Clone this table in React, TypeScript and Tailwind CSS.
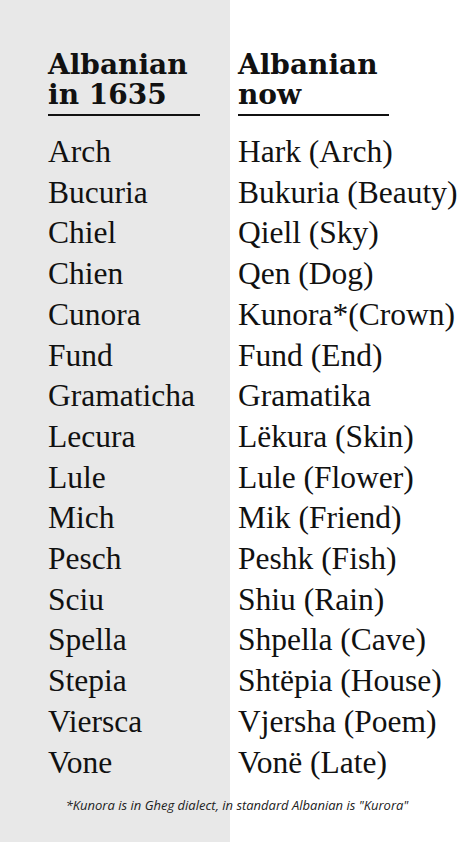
const rows: [string, string][] = [
  ['Arch', 'Hark (Arch)'],
  ['Bucuria', 'Bukuria (Beauty)'],
  ['Chiel', 'Qiell (Sky)'],
  ['Chien', 'Qen (Dog)'],
  ['Cunora', 'Kunora*(Crown)'],
  ['Fund', 'Fund (End)'],
  ['Gramaticha', 'Gramatika'],
  ['Lecura', 'Lëkura (Skin)'],
  ['Lule', 'Lule (Flower)'],
  ['Mich', 'Mik (Friend)'],
  ['Pesch', 'Peshk (Fish)'],
  ['Sciu', 'Shiu (Rain)'],
  ['Spella', 'Shpella (Cave)'],
  ['Stepia', 'Shtëpia (House)'],
  ['Viersca', 'Vjersha (Poem)'],
  ['Vone', 'Vonë (Late)'],
]

export default function App() {
  return (
    <div className="w-[474px] h-[842px] bg-[linear-gradient(to_right,#e8e8e8_230px,#ffffff_230px)] text-[#111] overflow-hidden">
      <div className="grid grid-cols-[230px_1fr] pt-[50px] font-['DejaVu_Serif',serif]">
        <div className="pl-[48px]">
          <div className="w-[152px] border-b-2 border-[#111] pb-[4px] text-[28px] leading-[30px] font-bold">
            Albanian<br />in 1635
          </div>
        </div>
        <div className="pl-[8px]">
          <div className="w-[151px] border-b-2 border-[#111] pb-[4px] text-[28px] leading-[30px] font-bold">
            Albanian<br />now
          </div>
        </div>
      </div>
      <div className="grid grid-cols-[230px_1fr] pt-[16px] font-['Liberation_Serif',serif] text-[31.5px] leading-[40.7px]">
        {rows.map(([old, now]) => (
          <div key={old} className="contents">
            <div className="pl-[48px]">{old}</div>
            <div className="pl-[8px] whitespace-nowrap">{now}</div>
          </div>
        ))}
      </div>
      <p className="mt-[13px] text-center italic text-[13px] font-['Open_Sans',sans-serif] text-[#222]">
        *Kunora is in Gheg dialect, in standard Albanian is "Kurora"
      </p>
    </div>
  )
}
